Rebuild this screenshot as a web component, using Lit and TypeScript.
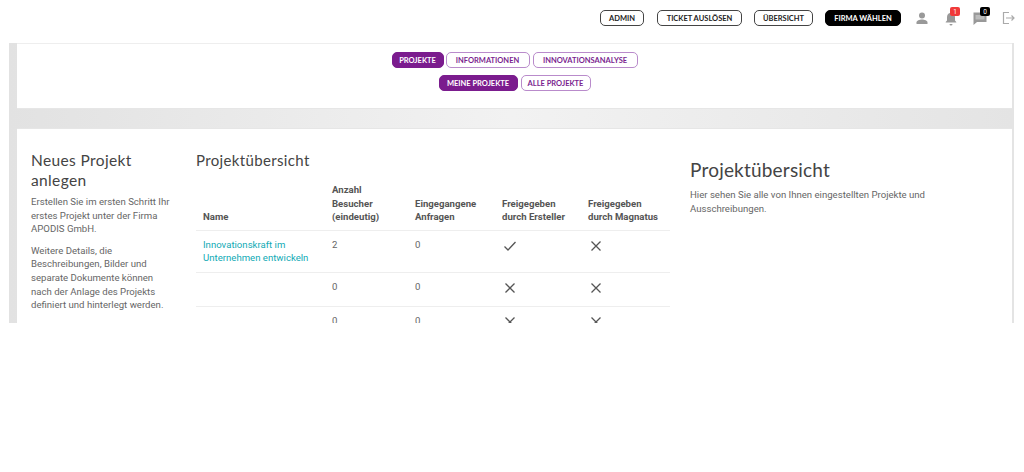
import { LitElement, html, css, svg } from "lit";
import { customElement } from "lit/decorators.js";

const check = svg`<svg class="mark" width="14" height="14" viewBox="0 0 14 14"><path d="M1.5 7.5L5 11L12.5 3" fill="none" stroke="#555" stroke-width="1.3"/></svg>`;
const cross = svg`<svg class="mark" width="14" height="14" viewBox="0 0 14 14"><path d="M2.5 2.5L11.5 11.5M11.5 2.5L2.5 11.5" fill="none" stroke="#555" stroke-width="1.3"/></svg>`;

@customElement("app-root")
export class AppRoot extends LitElement {
  static styles = css`
    :host { display: block; width: 1024px; height: 472px; background: #fff; overflow: hidden; font-family: Roboto, sans-serif; color: #666; font-size: 9.6px; }
    .top { height: 43px; box-sizing: border-box; display: flex; align-items: center; justify-content: flex-end; padding: 0 9px 7px 0; }
    .btn { box-sizing: border-box; height: 16px; border: 1px solid #444; border-radius: 5px; display: flex; align-items: center; justify-content: center; font-family: Lato, sans-serif; font-size: 7.5px; font-weight: 700; color: #222; background: #fff; margin-right: 12px; }
    .btn.first { margin-right: 13px; }
    .btn.dark { background: #000; color: #fff; border-color: #000; margin-right: 13px; }
    .ic { position: relative; display: flex; margin-right: 13px; }
    .ic.last { margin-right: 0; }
    .badge { position: absolute; top: -3px; right: -1px; width: 10px; height: 9px; border-radius: 2px; font-size: 6.5px; color: #fff; display: flex; align-items: center; justify-content: center; }
    .badge.red { background: #f03a3a; }
    .badge.black { background: #000; right: -2px; }
    .frame { height: 280px; margin-left: 9px; width: 1005px; background: linear-gradient(90deg, #e2e2e2, #f2f2f2 50%, #e4e4e4); padding-left: 8px; box-sizing: border-box; overflow: hidden; display: flex; flex-direction: column; }
    .panel { width: 995px; background: #fff; flex: none; }
    .tabs { height: 66px; box-sizing: border-box; padding-top: 8px; display: flex; flex-direction: column; align-items: center; gap: 7px; border-top: 1px solid #eee; border-bottom: 1px solid #e6e6e6; }
    .row { display: flex; gap: 2px; }
    .row.wide { gap: 3px; }
    .tab { box-sizing: border-box; height: 16px; border: 1px solid #b98bcb; border-radius: 5px; display: flex; align-items: center; justify-content: center; font-family: Lato, sans-serif; font-size: 7.5px; font-weight: 700; color: #7b1f8f; background: #fff; }
    .tab.on { background: #7b1c8e; border-color: #7b1c8e; color: #fff; }
    .gap { height: 19px; flex: none; }
    .content { height: 260px; box-sizing: border-box; border-top: 1px solid #e6e6e6; display: grid; grid-template-columns: 179px 494px 1fr; }
    h2 { margin: 0; font-family: Lato, sans-serif; font-weight: 400; color: #444; font-size: 15.5px; line-height: 20px; letter-spacing: 0.37px; }
    .left { padding: 21px 0 0 14px; }
    .left p { margin: 0 0 8px; width: 142px; line-height: 13.6px; }
    .left h2 { margin-bottom: 5px; width: 130px; }
    .mid { padding-top: 21px; }
    .mid h2 { height: 33px; font-size: 15px; letter-spacing: 0.35px; }
    table { border-collapse: collapse; width: 474px; table-layout: fixed; }
    th { font-weight: 700; font-size: 9.6px; color: #555; text-align: left; vertical-align: bottom; padding: 0 6px 6px 6px; line-height: 13.6px; border-bottom: 1px solid #eee; }
    td { padding: 7px 6px 0; vertical-align: top; line-height: 13.6px; border-bottom: 1px solid #eee; }
    th:first-child, td:first-child { padding-left: 7px; }
    tr.a td { height: 34px; }
    tr.b td { height: 26px; }
    a { color: #11aab5; text-decoration: none; }
    .mark { display: block; margin: 1.5px 0 0 1px; }
    .right { padding: 29px 0 0 0; }
    .right h2 { font-size: 19px; line-height: 23px; margin-bottom: 7px; letter-spacing: 0.2px; }
    .right p { margin: 0; width: 260px; line-height: 13.6px; }
  `;
  render() {
    return html`
      <div class="top">
        <div class="btn first" style="width:44px">ADMIN</div>
        <div class="btn" style="width:85px">TICKET AUSLÖSEN</div>
        <div class="btn" style="width:59px">ÜBERSICHT</div>
        <div class="btn dark" style="width:76px">FIRMA WÄHLEN</div>
        <div class="ic"><svg width="16" height="16" viewBox="0 0 16 16"><circle cx="8" cy="5.5" r="3" fill="#999"/><path d="M2.5 14v-1.5C2.5 10.5 5.500 9.500 8 9.500s5.500 1 5.500 3V14z" fill="#999"/></svg></div>
        <div class="ic"><svg width="16" height="16" viewBox="0 0 16 16"><path d="M8 1.500a1 1 0 0 1 1 1v.6c2 .5 3 2.100 3 4.100v3.300l1.300 1.500v.5H2.700v-.5L4 10.500V7.200c0-2 1-3.600 3-4.100v-.6a1 1 0 0 1 1-1zM6.500 14h3a1.500 1.500 0 0 1-3 0z" fill="#999"/></svg><span class="badge red">1</span></div>
        <div class="ic"><svg width="16" height="16" viewBox="0 0 16 16"><path d="M1.500 2.500h13v9.500H5L1.500 15z" fill="#999"/><rect x="3.500" y="5" width="9" height="4.500" fill="#fff" opacity=".35"/></svg><span class="badge black">0</span></div>
        <div class="ic last"><svg width="14" height="16" viewBox="0 0 14 16"><path d="M8 2.500H2.500v11H8M5 8h8M10.500 5.500L13 8l-2.500 2.500" fill="none" stroke="#aaa" stroke-width="1.200"/></svg></div>
      </div>
      <div class="frame">
        <div class="panel tabs">
          <div class="row">
            <div class="tab on" style="width:52px">PROJEKTE</div>
            <div class="tab" style="width:84px">INFORMATIONEN</div>
            <div class="tab" style="width:105px;margin-left:1px">INNOVATIONSANALYSE</div>
          </div>
          <div class="row wide">
            <div class="tab on" style="width:79px">MEINE PROJEKTE</div>
            <div class="tab" style="width:70px">ALLE PROJEKTE</div>
          </div>
        </div>
        <div class="gap"></div>
        <div class="panel content">
          <div class="left">
            <h2>Neues Projekt anlegen</h2>
            <p>Erstellen Sie im ersten Schritt Ihr erstes Projekt unter der Firma APODIS GmbH.</p>
            <p>Weitere Details, die Beschreibungen, Bilder und separate Dokumente können nach der Anlage des Projekts definiert und hinterlegt werden.</p>
          </div>
          <div class="mid">
            <h2>Projektübersicht</h2>
            <table>
              <colgroup><col style="width:130px"><col style="width:83px"><col style="width:87px"><col style="width:86px"><col style="width:88px"></colgroup>
              <thead><tr>
                <th>Name</th><th>Anzahl Besucher (eindeutig)</th><th>Eingegangene Anfragen</th><th>Freigegeben durch Ersteller</th><th>Freigegeben durch Magnatus</th>
              </tr></thead>
              <tbody>
                <tr class="a"><td><a href="#">Innovationskraft im Unternehmen entwickeln</a></td><td>2</td><td>0</td><td>${check}</td><td>${cross}</td></tr>
                <tr class="b"><td></td><td>0</td><td>0</td><td>${cross}</td><td>${cross}</td></tr>
                <tr class="b"><td></td><td>0</td><td>0</td><td>${cross}</td><td>${cross}</td></tr>
              </tbody>
            </table>
          </div>
          <div class="right">
            <h2>Projektübersicht</h2>
            <p>Hier sehen Sie alle von Ihnen eingestellten Projekte und Ausschreibungen.</p>
          </div>
        </div>
      </div>
    `;
  }
}
